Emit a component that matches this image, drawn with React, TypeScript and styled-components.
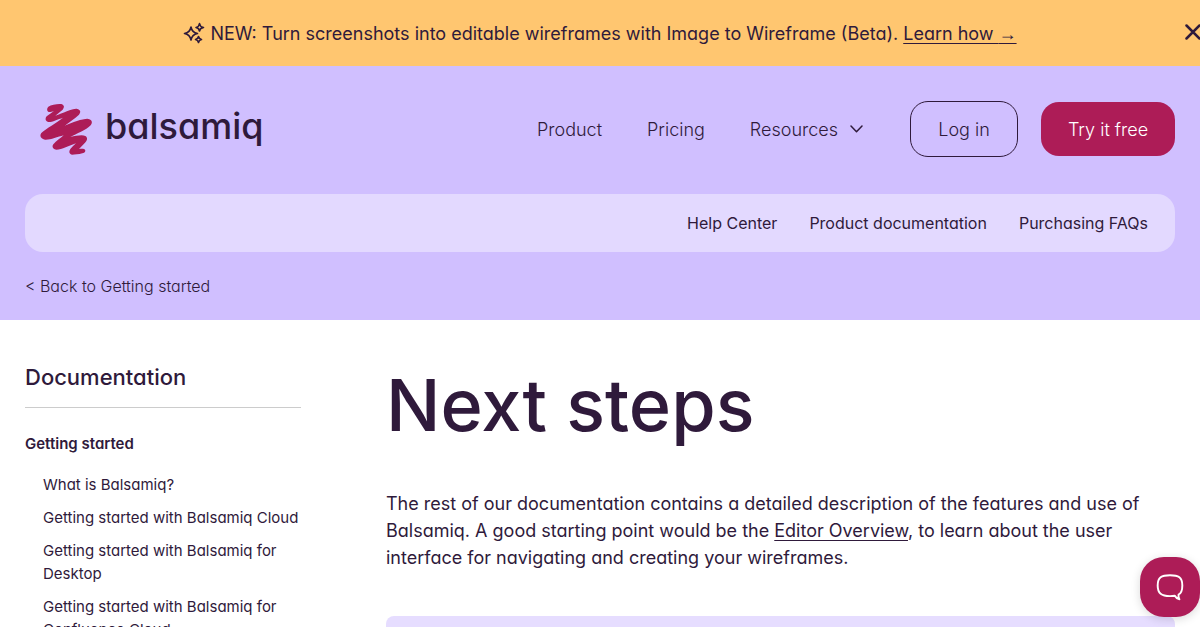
import React from "react";
import styled, { createGlobalStyle } from "styled-components";

const ink = "#2f1a3b";
const crimson = "#ad1c57";

const GlobalStyle = createGlobalStyle`
  * { box-sizing: border-box; }
  html { scrollbar-width: none; }
  body {
    margin: 0;
    background: #fff;
    color: ${ink};
    font-family: Inter, "Open Sans", sans-serif;
    font-feature-settings: "cv11";
    font-size: 18px;
    font-weight: 300;
    line-height: 27px;
  }
  a { color: inherit; text-decoration: none; }
`;

const Banner = styled.div`
  position: relative;
  display: flex;
  align-items: center;
  justify-content: center;
  gap: 5px;
  height: 66px;
  background: #ffc670;
`;

const BannerText = styled.p`
  margin: 0;
  font-weight: 400;
`;

const TextLink = styled.a`
  text-decoration: underline;
  text-decoration-thickness: 1px;
  text-underline-offset: 3px;
`;

const Arrow = styled.span`
  font-family: "Liberation Sans", sans-serif;
  line-height: 1;
`;

const CloseButton = styled.button`
  position: absolute;
  top: 24px;
  right: -1px;
  width: 16px;
  height: 16px;
  padding: 0;
  border: 0;
  background: none;
  color: ${ink};
  svg { display: block; }
`;

const Hero = styled.header`
  padding: 35px 25px 21px;
  background: #d0bfff;
`;

const TopBar = styled.div`
  display: flex;
  align-items: center;
  justify-content: space-between;
  height: 56px;
`;

const Brand = styled.a`
  display: flex;
  align-items: center;
  gap: 12px;
  padding-left: 15px;
`;

const Wordmark = styled.span`
  font-size: 36px;
  font-weight: 500;
  line-height: 48px;
  padding-bottom: 6px;
`;

const MainNav = styled.nav`
  display: flex;
  align-items: center;
  gap: 45px;
`;

const NavLink = styled.a``;

const MenuButton = styled.button`
  display: flex;
  align-items: center;
  gap: 12px;
  margin-right: 2px;
  padding: 0;
  border: 0;
  background: none;
  color: inherit;
  font: inherit;
  font-feature-settings: inherit;
`;

const Actions = styled.div`
  display: flex;
  align-items: center;
  gap: 23px;
`;

const ActionLink = styled.a<{ $filled?: boolean }>`
  display: flex;
  align-items: center;
  justify-content: center;
  width: ${(p) => (p.$filled ? 134 : 108)}px;
  height: ${(p) => (p.$filled ? 54 : 56)}px;
  border: ${(p) => (p.$filled ? "0" : `1px solid ${ink}`)};
  border-radius: 18px;
  background: ${(p) => (p.$filled ? crimson : "transparent")};
  color: ${(p) => (p.$filled ? "#fff" : ink)};
`;

const SubNav = styled.nav`
  display: flex;
  align-items: center;
  justify-content: flex-end;
  gap: 32px;
  height: 58px;
  margin-top: 37px;
  padding: 0 27px;
  border-radius: 18px;
  background: #e3d9ff;
  font-size: 16px;
  font-weight: 400;
`;

const BackLink = styled.a`
  display: block;
  margin-top: 21px;
  font-size: 16px;
  line-height: 26px;
`;

const Page = styled.div`
  display: grid;
  grid-template-columns: 24% 1fr;
  column-gap: 85px;
  padding: 0 25px;
`;

const Sidebar = styled.aside`
  padding-top: 40px;
`;

const SidebarTitle = styled.h2`
  margin: 0;
  padding-bottom: 13px;
  border-bottom: 1px solid #ccc;
  font-size: 22px;
  font-weight: 500;
  line-height: 34px;
`;

const SectionTitle = styled.h3`
  margin: 24px 0 0;
  font-size: 15px;
  font-weight: 600;
  line-height: 23px;
`;

const DocList = styled.ul`
  display: flex;
  flex-direction: column;
  gap: 10px;
  margin: 18px 0 0;
  padding: 0 0 0 18px;
  list-style: none;
  font-size: 15px;
  font-weight: 400;
  line-height: 23px;
`;

const Article = styled.main`
  padding-top: 40px;
`;

const Title = styled.h1`
  margin: 0;
  font-size: 72px;
  font-weight: 500;
  line-height: 90px;
`;

const Paragraph = styled.p`
  max-width: 770px;
  margin: 40px 0 45px;
  font-weight: 400;
`;

const Callout = styled.div`
  height: 90px;
  border-radius: 8px;
  background: #e6ddff;
`;

const ChatButton = styled.button`
  position: fixed;
  right: 0;
  bottom: 10px;
  display: flex;
  align-items: center;
  justify-content: center;
  width: 60px;
  height: 60px;
  padding: 0;
  border: 0;
  border-radius: 24px;
  background: ${crimson};
  box-shadow: 0 2px 10px rgba(0, 0, 0, 0.15);
`;

const Sparkles = () => (
  <svg width="22" height="22" viewBox="0 0 22 22" fill="none" stroke={ink} strokeWidth="1.6" strokeLinejoin="round" aria-hidden="true">
    <path d="M8 5 Q9 10.500 14.500 11.500 Q9 12.500 8 18 Q7 12.500 1.500 11.500 Q7 10.500 8 5Z" />
    <path d="M16.500 1.500 Q17 5 20.500 5.500 Q17 6 16.500 9 Q16 6 13 5.500 Q16 5 16.500 1.500Z" />
    <path d="M15.500 14.500 Q16 17 18.500 17.500 Q16 18 15.500 20.500 Q15 18 12.500 17.500 Q15 17 15.500 14.500Z" />
  </svg>
);

const Scribble = () => (
  <svg width="53" height="53" viewBox="11 10 159 159" fill={crimson} aria-hidden="true">
    <path d="M36 21 C45 14 65 12 75 13 C84 16 85 23 79 30 L57 48 C80 40 108 26 121 27 C132 29 135 37 128 45 C115 57 98 68 85 78 C108 68 138 57 153 57 C167 58 170 68 163 77 C149 92 120 102 102 112 C120 108 138 105 147 109 C155 114 153 122 146 129 L128 148 C135 147 143 146 146 150 C149 156 144 160 138 161 C127 164 115 165 107 165 C98 163 97 155 102 148 C107 142 113 137 119 131 C98 138 77 150 60 150 C49 149 46 141 51 134 C60 123 72 116 82 107 C63 112 42 121 26 120 C13 118 9 108 15 100 C30 86 60 70 80 54 C64 59 46 68 36 67 C26 64 26 56 31 50 L53 34 C46 36 41 38 37 37 C31 34 31 26 36 21Z" />
  </svg>
);

export default function App() {
  return (
    <>
      <GlobalStyle />
      <Banner>
        <Sparkles />
        <BannerText>
          NEW: Turn screenshots into editable wireframes with Image to Wireframe (Beta).{" "}
          <TextLink href="#image-to-wireframe">Learn how <Arrow>→</Arrow></TextLink>
        </BannerText>
        <CloseButton aria-label="Close banner">
          <svg width="16" height="16" viewBox="0 0 16 16" fill="none" stroke="currentColor" strokeWidth="2.500" strokeLinecap="round">
            <path d="M1.500 1.500 L14.500 14.500 M14.500 1.500 L1.500 14.500" />
          </svg>
        </CloseButton>
      </Banner>
      <Hero>
        <TopBar>
          <Brand href="#home">
            <Scribble />
            <Wordmark>balsamiq</Wordmark>
          </Brand>
          <MainNav>
            <NavLink href="#product">Product</NavLink>
            <NavLink href="#pricing">Pricing</NavLink>
            <MenuButton>
              Resources
              <svg width="13" height="8" viewBox="0 0 13 8" fill="none" stroke={ink} strokeWidth="1.500" strokeLinecap="round" strokeLinejoin="round" aria-hidden="true">
                <path d="M1 1 L6.500 6.700 L12 1" />
              </svg>
            </MenuButton>
            <Actions>
              <ActionLink href="#login">Log in</ActionLink>
              <ActionLink href="#try" $filled>Try it free</ActionLink>
            </Actions>
          </MainNav>
        </TopBar>
        <SubNav>
          <a href="#help">Help Center</a>
          <a href="#docs">Product documentation</a>
          <a href="#faqs">Purchasing FAQs</a>
        </SubNav>
        <BackLink href="#getting-started">&lt; Back to Getting started</BackLink>
      </Hero>
      <Page>
        <Sidebar>
          <SidebarTitle>Documentation</SidebarTitle>
          <SectionTitle>Getting started</SectionTitle>
          <DocList>
            <li><a href="#what">What is Balsamiq?</a></li>
            <li><a href="#cloud">Getting started with Balsamiq Cloud</a></li>
            <li><a href="#desktop">Getting started with Balsamiq for Desktop</a></li>
            <li><a href="#confluence">Getting started with Balsamiq for Confluence Cloud</a></li>
          </DocList>
        </Sidebar>
        <Article>
          <Title>Next steps</Title>
          <Paragraph>
            The rest of our documentation contains a detailed description of the features and use of
            Balsamiq. A good starting point would be the <TextLink href="#editor">Editor Overview</TextLink>, to learn
            about the user interface for navigating and creating your wireframes.
          </Paragraph>
          <Callout />
        </Article>
      </Page>
      <ChatButton aria-label="Open chat">
        <svg width="30" height="30" viewBox="0 0 28 28" fill="none" stroke="#fff" strokeWidth="1.800" strokeLinejoin="round" aria-hidden="true">
          <path d="M14 3 C6 3 2.500 5 2.500 12.500 C2.500 20 6 22.500 14 22.500 C15.500 22.500 17 22.400 18.500 22.200 Q20 25 22.800 25.500 Q21.500 23 22 21 C25 19.500 25.500 17 25.500 12.500 C25.500 5 22 3 14 3Z" />
        </svg>
      </ChatButton>
    </>
  );
}
